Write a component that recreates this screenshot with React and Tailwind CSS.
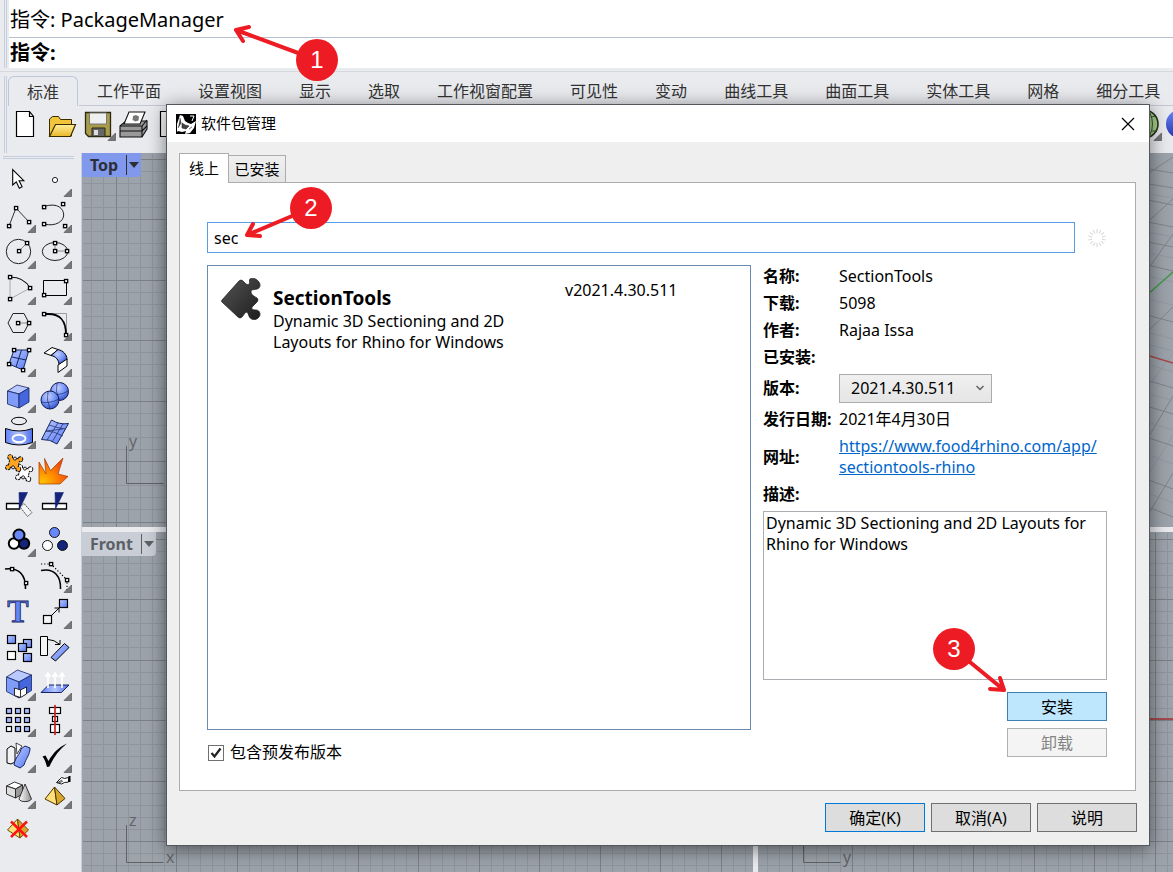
import React, { useState } from 'react';

const BLUE = '#7f9cf8';
const NAVY = '#13247a';

const menuTabs = ['标准', '工作平面', '设置视图', '显示', '选取', '工作视窗配置', '可见性', '变动', '曲线工具', '曲面工具', '实体工具', '网格', '细分工具'];

// Small square control point used by most of the drawing tools
const Knob = ({ x, y }) => (
  <rect x={x - 1.5} y={y - 1.5} width="3.2" height="3.2" fill="#fff" stroke="#000" strokeWidth="1.3" />
);

const Box = ({ x, y, w = 8, h = w, fill = 'url(#blueFade)' }) => (
  <rect x={x} y={y} width={w} height={h} fill={fill} stroke="#000" strokeWidth="1.2" />
);

const Jigsaw = ({ x, y, fill }) => {
  const shape = (
    <>
      <rect x="-4.5" y="-4.5" width="9" height="9" />
      <circle cx="-5" cy="-5" r="2" />
      <circle cx="5.500" cy="-5" r="2" />
      <circle cx="-5" cy="5.500" r="2" />
      <circle cx="5.500" cy="5" r="2" />
    </>
  );
  return (
    <g transform={`translate(${x} ${y}) rotate(12)`}>
      <g fill="none" stroke="#000" strokeWidth="1.800" strokeDasharray="2.500 .6">{shape}</g>
      <g fill={fill}>{shape}</g>
      <circle cx="0" cy="-4.500" r="1.500" fill="#eaebef" stroke="#000" strokeWidth=".8" />
      <circle cx="0" cy="4.500" r="1.500" fill="#eaebef" stroke="#000" strokeWidth=".8" />
    </g>
  );
};

const Gradients = () => (
  <svg className="absolute h-0 w-0" aria-hidden="true">
    <defs>
      <linearGradient id="blueFade" x1="0" y1="0" x2="1" y2="1">
        <stop offset="0" stopColor="#bccbff" />
        <stop offset="1" stopColor="#5478f5" />
      </linearGradient>
      <linearGradient id="blueSide" x1="0" y1="0" x2="1" y2="0">
        <stop offset="0" stopColor="#5f80f8" />
        <stop offset="0.5" stopColor="#b7c6ff" />
        <stop offset="1" stopColor="#4a6cec" />
      </linearGradient>
      <radialGradient id="ball" cx="0.4" cy="0.3" r="0.75">
        <stop offset="0" stopColor="#c3d0ff" />
        <stop offset="0.5" stopColor="#7b98fa" />
        <stop offset="1" stopColor="#2c4ac4" />
      </radialGradient>
      <linearGradient id="gold" x1="0" y1="0" x2="0" y2="1">
        <stop offset="0" stopColor="#fff09a" />
        <stop offset="1" stopColor="#e9b62a" />
      </linearGradient>
      <radialGradient id="fire" cx="0.1" cy="0.95" r="0.95">
        <stop offset="0" stopColor="#ffc400" />
        <stop offset="0.5" stopColor="#ff8a00" />
        <stop offset="1" stopColor="#f04a10" />
      </radialGradient>
      <linearGradient id="steel" x1="0" y1="0" x2="1" y2="0">
        <stop offset="0" stopColor="#fff" />
        <stop offset="1" stopColor="#8f8f8f" />
      </linearGradient>
      <linearGradient id="coal" x1="0" y1="0" x2="1" y2="1">
        <stop offset="0" stopColor="#555" />
        <stop offset="1" stopColor="#1d1d1d" />
      </linearGradient>
      <linearGradient id="shade" x1="0" y1="0" x2="0" y2="1">
        <stop offset="0" stopColor="#6a86f8" />
        <stop offset="1" stopColor="#2536b0" />
      </linearGradient>
    </defs>
  </svg>
);

const tools = [
  { label: 'Select', art: <path d="M12.7 7.5v15.5l3.6-3.2 3 6.4 2.8-1.4-3-6.1h4.7z" fill="#fff" stroke="#000" strokeWidth="1.1" /> },
  { label: 'Point', more: true, art: <circle cx="19" cy="18" r="2.6" fill="#fff" stroke="#222" /> },
  {
    label: 'Polyline', more: true, art: (
      <g fill="none" stroke="#333"><path d="M9 28l7-18 13 14" /><Knob x={9} y={28} /><Knob x={16} y={10} /><Knob x={29} y={24} /></g>
    ),
  },
  {
    label: 'Curve', more: true, art: (
      <g fill="none" stroke="#222"><path d="M8 8.5C22 4 27.700 11 27.700 17S20 29 8 26" /><Knob x={8} y={9} /><Knob x={27} y={6} /><Knob x={29} y={28} /><Knob x={8} y={26} /></g>
    ),
  },
  {
    label: 'Circle', more: true, art: (
      <g fill="none" stroke="#222"><circle cx="18.500" cy="17.500" r="12.200" /><path d="M19 17l8-8" stroke="#888" /><Knob x={19} y={17} /><Knob x={27} y={9} /></g>
    ),
  },
  {
    label: 'Ellipse', more: true, art: (
      <g fill="none" stroke="#222"><ellipse cx="19" cy="17.500" rx="12.700" ry="9" /><path d="M19 9v8h12" stroke="#888" /><Knob x={19} y={9} /><Knob x={19} y={17} /><Knob x={31} y={17} /></g>
    ),
  },
  {
    label: 'Arc', more: true, art: (
      <g fill="none" stroke="#aaa"><path d="M10 7v22l20-11" /><path d="M10 7q14 0 20 11" stroke="#111" strokeWidth="1.2" /><Knob x={10} y={7} /><Knob x={30} y={18} /><Knob x={10} y={29} /></g>
    ),
  },
  {
    label: 'Rectangle', more: true, art: (
      <g fill="none" stroke="#000"><path d="M7.500 10.500h23v15h-23z" /><Knob x={30} y={11} /><Knob x={8} y={25} /></g>
    ),
  },
  {
    label: 'Polygon', more: true, art: (
      <g fill="none" stroke="#222"><path d="M8 17l5-9.500h11L29 17l-5 9.500H13z" /><path d="M18 17h11" stroke="#888" /><Knob x={18} y={17} /><Knob x={29} y={17} /></g>
    ),
  },
  {
    label: 'Fillet', more: true, art: (
      <g fill="none" stroke="#999"><path d="M8 7.500h22.500V29" /><path d="M8 8h4c13 0 18 7 18 21" stroke="#000" strokeWidth="1.800" /><Knob x={8} y={8} /><Knob x={30} y={29} /></g>
    ),
  },
  {
    label: 'Surface', more: true, art: (
      <g stroke="#15245e"><path d="M14 8h15l-6 20-14-6z" fill="url(#blueFade)" /><path d="M12 15l14 3M21.500 8L16 25" fill="none" /><Knob x={14} y={8} /><Knob x={29} y={8} /><Knob x={23} y={28} /><Knob x={9} y={22} /></g>
    ),
  },
  {
    label: 'Blend surface', more: true, art: (
      <g stroke="#000"><path d="M8 11l8-5.500 6 2-7 6z" fill="#fff" /><path d="M15 13.500l7-6c5 1 9 5 9 10l-8 5.500c0-5-3-8.500-8-9.500z" fill="url(#ball)" /><path d="M22 23l9-6v7l-9 6.500z" fill="#fff" /></g>
    ),
  },
  {
    label: 'Box', more: true, art: (
      <g stroke="#15245e" strokeWidth=".8"><path d="M7.500 13l9.500-6 12 3-10 6z" fill="#b9c8ff" /><path d="M7.500 13L19 16v14L7.500 26z" fill={BLUE} /><path d="M19 16l10-6v14l-10 6z" fill="#4666e0" /></g>
    ),
  },
  {
    label: 'Spheres', more: true, art: (
      <g stroke="#0f1c50"><circle cx="23.500" cy="13.500" r="9" fill="url(#ball)" /><path d="M15 16q9 2 17-3M21 5q-2 8 2 17" fill="none" strokeWidth=".6" /><circle cx="14" cy="22" r="9" fill="url(#ball)" /><path d="M5 24q9 2 18-3M12 13q-2 9 2 18" fill="none" strokeWidth=".6" /></g>
    ),
  },
  {
    label: 'Project', more: true, art: (
      <g stroke="#000"><ellipse cx="19" cy="7" rx="7.500" ry="3.700" fill="none" /><path d="M5.500 14.500q13.500 5 27 0v14q-13.500 5-27 0z" fill="url(#blueSide)" /><ellipse cx="19" cy="24.500" rx="6.500" ry="3.700" fill={BLUE} stroke="#fff" strokeWidth="1.800" /></g>
    ),
  },
  {
    label: 'Patch', more: true, art: (
      <g stroke="#15245e"><path d="M5.500 25.500L15.500 6q8 5 17 3.500L21 30q-7-5-15.500-4.500z" fill="url(#blueFade)" /><path d="M10 17q8 0 17 5M13 11q8 3 17 4M11 26L22 9M16 28L27 10M10 17l17-2" fill="none" strokeWidth=".7" /></g>
    ),
  },
  { label: 'Puzzle', art: <g><Jigsaw x={24} y={23} fill="#fff" /><Jigsaw x={14} y={13} fill="#ffa51f" /></g> },
  { label: 'Explode', art: <path d="M3 12l7 12L8.500 8.500l6 12L27 8l-5 16 10 2.500-8 7.500H3z" fill="url(#fire)" stroke="#a53b00" strokeWidth=".7" /> },
  {
    label: 'Trim', art: (
      <g stroke="#000"><path d="M6.500 17.500h13v5.500h-13z" fill="#fff" strokeWidth="1.300" /><path d="M20 21l4-3.500 8 9-4.500 4z" fill="#f4f4f4" stroke="#444" strokeDasharray="2 .7" strokeWidth=".9" /><path d="M19 6.500h8.500L19.500 23z" fill={NAVY} stroke={NAVY} strokeWidth=".6" /></g>
    ),
  },
  {
    label: 'Split', art: (
      <g stroke="#000"><path d="M6.500 17.500h24v5.500h-24z" fill="#fff" strokeWidth="1.300" /><path d="M19 6.500h8.500L19.500 23z" fill={NAVY} stroke={NAVY} strokeWidth=".6" /></g>
    ),
  },
  {
    label: 'Boolean', more: true, art: (
      <g stroke="#000" strokeWidth="2"><circle cx="24" cy="21.500" r="5.200" fill={NAVY} /><circle cx="14" cy="21.500" r="5.200" fill="#fff" /><circle cx="19" cy="13" r="5.500" fill="#6787fa" /></g>
    ),
  },
  {
    label: 'Separate', art: (
      <g stroke="#111"><circle cx="18.500" cy="10.500" r="5" fill="#6787fa" /><circle cx="11.500" cy="23.500" r="5" fill="#fff" /><circle cx="26.500" cy="23.500" r="5" fill={NAVY} /></g>
    ),
  },
  {
    label: 'Edit curve', art: (
      <g><path d="M5 11c14-2 21 6 20.500 20" fill="none" stroke="#000" strokeWidth="1.600" /><Knob x={12} y={11} /><Knob x={26} y={25} /></g>
    ),
  },
  {
    label: 'Control points', more: true, art: (
      <g><path d="M5 6h10l16 16v10" fill="none" stroke="#000" strokeWidth="1.200" strokeDasharray="1.200 2" /><path d="M5 12.500c14-3 20 7 19.500 18.500" fill="none" stroke="#000" strokeWidth="1.600" /><Knob x={15} y={6} /><Knob x={31} y={22} /></g>
    ),
  },
  {
    label: 'Text', art: (
      <text x="18" y="28" textAnchor="middle" className="font-['Liberation_Serif',serif] text-[32px] font-bold" fill="#6483f5" stroke="#15245e" strokeWidth=".8">T</text>
    ),
  },
  {
    label: 'Scale', more: true, art: (
      <g><Box x={7.5} y={21.5} fill="#f6f6f6" /><Box x={23.5} y={5.5} /><path d="M16 21l7-7M18.500 14H23v4.500" fill="none" stroke="#000" /></g>
    ),
  },
  {
    label: 'Copy', art: (
      <g><Box x={7.5} y={5.5} /><Box x={23.5} y={9.5} /><Box x={18.5} y={13.5} /><Box x={7.5} y={21.5} fill="#fff" /><Box x={23.5} y={23.5} /></g>
    ),
  },
  {
    label: 'Rotate', art: (
      <g stroke="#000"><path d="M4.500 6.500h7v19h-7z" fill="#f4f4f4" /><path d="M12 9.500q6 0 12 5M24 10v4.500h-5" fill="none" /><path d="M15 27.500L28.500 13.500l4.500 4-13.500 13.500z" fill="url(#blueFade)" /></g>
    ),
  },
  {
    label: 'Solid tools', more: true, art: (
      <g stroke="#15245e" strokeWidth=".8"><path d="M6.500 11l11-7 14 5-12.500 7z" fill="#b9c8ff" /><path d="M6.500 11L19 16v16L6.500 25.500z" fill={BLUE} /><path d="M19 16l12.500-7v15.500L19 32z" fill="#4666e0" /><path d="M14.500 22l6 2 6-3v7l-6 3.500-6-2z" fill="#fff" stroke="#000" /><path d="M20.500 24v7" stroke="#000" /></g>
    ),
  },
  {
    label: 'Extrude', more: true, art: (
      <g><path d="M5 26.500L12.500 19H33l-7.500 7.500z" fill="url(#blueSide)" stroke="#15245e" /><path d="M12 22V7M19 22V7M26 22V7M9.500 11L12 7l2.500 4M16.500 11L19 7l2.500 4M23.500 11L26 7l2.500 4" fill="none" stroke="#fff" strokeWidth="1.600" /></g>
    ),
  },
  {
    label: 'Array', more: true, art: (
      <g>
        {[6.5, 15.5, 24.5].map((y) => [6.5, 15.5, 24.5].map((x) => (
          <Box key={`${x}-${y}`} x={x} y={y} w={5} fill={x < 7 && y > 24 ? '#fff' : '#a3b8ff'} />
        )))}
      </g>
    ),
  },
  {
    label: 'Align', more: true, art: (
      <g><Box x={13.5} y={5.5} w={11} h={6} fill="#fff" /><Box x={16.5} y={14.5} w={5} fill="#fff" /><Box x={14.5} y={22.5} w={9} h={8} fill="#fff" /><path d="M19 3v30" stroke="#d21f1f" strokeWidth="1.700" /></g>
    ),
  },
  {
    label: 'Flow', more: true, art: (
      <g stroke="#000"><path d="M7 11l4-3 4 2v14l-4 2-4-1z" fill="#f2f2f2" /><path d="M16 5l6 3-5 8z" fill="#fff" strokeWidth=".7" /><path d="M21 11l4-3 5 2c0 7-4 10-6 17l-4 3-6-3c1-8 6-10 7-16z" fill="url(#blueFade)" stroke="#15245e" /></g>
    ),
  },
  { label: 'Check', more: true, art: <path d="M6.500 18.500l3-1 3 5.500C17 15 23 9 31 5.500 23 12 17 20 13.500 28.500l-2.500.5c-1-4-2.500-8-4.500-10.500z" fill="#000" /> },
  {
    label: 'Primitives', more: true, art: (
      <g stroke="#222" strokeWidth=".9"><path d="M6.500 12l8-4 8 3-7 4z" fill="#fff" /><path d="M6.500 12l9 3v9l-9-4z" fill="#ddd" /><path d="M15.500 15l7-4v9l-7 4z" fill="#9a9a9a" /><path d="M25 10l6.500 15c-2 3.500-11 3.500-12.500 0z" fill="url(#steel)" /></g>
    ),
  },
  {
    label: 'Render', more: true, art: (
      <g stroke="#4a3500"><path d="M9 25l9.500-12L21 31z" fill="#ffe07a" /><path d="M18.500 13L29 24.500 21 31z" fill="#d9a62c" /><path d="M20.500 8.500l5-5 3 1 4-1v4.500l-4 .5-3 1.500z" fill="#fff" stroke="#000" strokeWidth=".9" /><path d="M21 9l5-3M23 9l4-2" stroke="#000" strokeWidth=".7" /><path d="M33.500 2v6" stroke="#000" strokeWidth="2" /></g>
    ),
  },
  {
    label: 'Delete', art: (
      <g stroke="#6b4b00"><path d="M7.500 20l10-11L20 28z" fill="#ffe07a" /><path d="M17.500 9l11 11-8.500 8z" fill="#d9a62c" /><path d="M11 11.500l16 15.500M27 11.500L11 27" stroke="#f11" strokeWidth="2.500" /></g>
    ),
  },
];

const sheet = <path d="M8.500 5.500h13l4 5v20h-17zM21.500 6v4.500h4" fill="#fff" stroke="#000" strokeWidth="1.200" />;

const fileTools = [
  { label: 'New', art: sheet },
  {
    label: 'Open', art: (
      <g stroke="#3a2c00"><path d="M5.500 30V13l3-2.500h6l2 3h11V30z" fill="#f0c53c" /><path d="M5.500 30.500l6-12h20l-5 12z" fill="url(#gold)" strokeWidth="1.200" /></g>
    ),
  },
  {
    label: 'Save', more: true, art: (
      <g stroke="#2a2810"><path d="M5.500 6.500h25v24h-22l-3-3z" fill="#a89c4a" strokeWidth="1.300" /><path d="M9.500 7h17v11h-17z" fill="#eef0f0" stroke="#777" /><path d="M12 22h13v8.500H12z" fill="#666" /><path d="M14 24h4v5h-4z" fill="#ddd" stroke="none" /></g>
    ),
  },
  {
    label: 'Print', art: (
      <g stroke="#111" strokeWidth="1.100"><path d="M4 20l6-5h21v8l-5 8H4z" fill="#999" /><path d="M4 20h22l5-6M4 25h22l5-5M26 20v11" fill="none" /><path d="M13 6h16l-5 12H8z" fill="#fff" /><path d="M17 10l3-1 3 1.500-.5 4-3 1-3-1.500z" fill="#777" stroke="none" /></g>
    ),
  },
  { label: 'Properties', art: sheet },
];

const ToolButton = ({ label, more, art }) => (
  <button type="button" aria-label={label} className="h-9 w-9 shrink-0">
    <svg viewBox="0 0 36 36" className="h-9 w-9">
      {art}
      {more && <path d="M35.500 27v7.500H28z" fill="#777" stroke="#555" strokeWidth=".7" />}
    </svg>
  </button>
);

// Construction plane grid: every fifth line is darker
const Grid = ({ x0, y0, children }) => {
  const lines = Array.from({ length: 100 }, (_, i) => i);
  const draw = (bold) =>
    lines
      .filter((i) => (i % 5 === 0) === bold)
      .map((i) => `M${Math.round(x0 + i * 12.1)} 0v2000M0 ${Math.round(y0 + i * 12.1)}h3000`)
      .join('');
  return (
    <svg className="absolute inset-0 h-full w-full" shapeRendering="crispEdges" aria-hidden="true">
      <path d={draw(false)} transform="translate(.5 .5)" stroke="#8e959e" />
      <path d={draw(true)} transform="translate(.5 .5)" stroke="#7b8188" />
      {children}
    </svg>
  );
};

const Axes = ({ up, right, className }) => (
  <svg viewBox="0 -12 56 64" className={`absolute h-16 w-14 text-[#5f6368] ${className}`}>
    <path d="M.500 10v37.500h37" fill="none" stroke="currentColor" />
    <g fill="currentColor" className="font-['Open_Sans',sans-serif] text-[16px]">
      {up && <text x="3" y="11">{up}</text>}
      {right && <text x="40" y="48">{right}</text>}
    </g>
  </svg>
);

const ViewTitle = ({ children, className }) => (
  <button type="button" className={`absolute left-0 top-0 flex h-6 items-center rounded-br text-base font-bold ${className}`}>
    <span className="px-2">{children}</span>
    <span className="flex h-5 items-center border-l border-current px-[2px]">
      <svg viewBox="0 0 10 10" className="h-[10px] w-[10px]"><path d="M0 2h10L5 8z" fill="currentColor" /></svg>
    </span>
  </button>
);

// Numbered red marker with an arrow to the thing it explains
const Marker = ({ n, cx, cy, arrow, className }) => (
  <svg viewBox="0 0 112 72" className={`pointer-events-none absolute h-[72px] w-[112px] ${className}`}>
    <path d={arrow} fill="none" stroke="#ed1c24" strokeWidth="4" strokeLinecap="round" strokeLinejoin="round" />
    <circle cx={cx} cy={cy} r="21" fill="#ed1c24" />
    <text x={cx} y={cy + 8} textAnchor="middle" fill="#fff" className="font-['Liberation_Sans',sans-serif] text-[24px]">{n}</text>
  </svg>
);

const PuzzlePiece = () => (
  <svg viewBox="0 0 40 42" className="mt-3 h-[42px] w-10 shrink-0">
    <path d="M1 22L18 3q2-2 4 0l3 3c3 2 4-1 3.500-3C28 0 32-1 36 2s4 8 0 9c-3 1-6 0-6 3s3 4 6 6q2 2 0 4l-4 4c-3 3 0 4 3 4 4 0 5 5 3 7-3 4-9 3-10-1-1-3-2-5-4-3l-3 4q-2 2-4 0L1 24q-1-1 0-2z" fill="url(#coal)" stroke="#222" strokeWidth=".8" />
  </svg>
);

const Spinner = () => (
  <svg viewBox="0 0 20 20" className="h-5 w-5 shrink-0" aria-label="loading">
    {Array.from({ length: 14 }, (_, i) => (
      <path key={i} d="M10 1v4" stroke="#dcdcdc" strokeWidth="1.200" transform={`rotate(${i * 25.714} 10 10)`} />
    ))}
  </svg>
);

const dialogButton = 'h-[29px] w-[100px] border text-base leading-5';

const PackageDialog = () => {
  const [query, setQuery] = useState('sec');
  const [prerelease, setPrerelease] = useState(true);

  return (
    <section role="dialog" aria-label="软件包管理" className="absolute left-[166px] right-[23px] top-[104px] border border-[#54585c] bg-[#efefef] text-base leading-[21px] text-black shadow-[0_3px_18px_rgba(0,0,0,0.5)]">
      <header className="flex h-[37px] items-center bg-white pl-[9px] pr-[14px]">
        <svg viewBox="0 0 20 20" className="h-5 w-5" aria-hidden="true">
          <path d="M0 0h20v20H0z" />
          <path d="M1 10l3-9 3 1 2 5 3 2 3 1 5-3-2 7-4 5-5 1 1-3-4 1-4-1-1 1z" fill="#fff" />
          <path d="M6 9l3 2 4 1-3 3-4-1zM13 15l3-2M4 4l1 5-3 5" fill="#444" stroke="#222" strokeWidth=".6" />
          <path d="M14 2h4l-2 5" fill="none" stroke="#fff" />
        </svg>
        <h1 className="ml-[5px] text-[15px]">软件包管理</h1>
        <button type="button" aria-label="Close" className="ml-auto">
          <svg viewBox="0 0 14 14" className="h-[14px] w-[14px]"><path d="M1 1l12 12M13 1L1 13" stroke="#000" strokeWidth="1.200" /></svg>
        </button>
      </header>

      <div className="pb-[13px] pl-3 pr-[13px] pt-[11px]">
        <div role="tablist" className="flex items-end text-[15px]">
          <button type="button" role="tab" aria-selected="true" className="relative -mb-px h-[30px] w-[50px] border border-b-0 border-[#acacac] bg-white">线上</button>
          <button type="button" role="tab" aria-selected="false" className="h-[27px] w-[57px] border border-b-0 border-l-0 border-[#acacac] bg-linear-to-b from-[#f0f0f0] to-[#e4e4e4]">已安装</button>
        </div>

        <div className="border border-[#acacac] bg-white pb-[33px] pl-[27px] pr-7 pt-[39px]">
          <div className="flex items-center gap-3">
            <input
              type="text"
              aria-label="Search packages"
              value={query}
              onChange={(e) => setQuery(e.target.value)}
              className="h-[31px] min-w-0 flex-1 border border-[#569de5] px-[6px] outline-none"
            />
            <Spinner />
          </div>

          <div className="mt-3 flex gap-3">
            <div className="-mb-[6px] flex min-w-0 flex-1 flex-col">
              <ul className="flex-1 border border-[#6a8bb0]">
                <li className="flex pl-[13px] pr-3">
                  <PuzzlePiece />
                  <div className="ml-3 mt-[19px] w-[280px]">
                    <h2 className="text-[19px] font-bold leading-[26px]">SectionTools</h2>
                    <p>Dynamic 3D Sectioning and 2D Layouts for Rhino for Windows</p>
                  </div>
                  <span className="ml-3 mt-[14px]">v2021.4.30.511</span>
                </li>
              </ul>
              <label className="mt-3 flex items-center gap-[6px]">
                <span className="relative ml-px h-4 w-4">
                  <input
                    type="checkbox"
                    checked={prerelease}
                    onChange={(e) => setPrerelease(e.target.checked)}
                    className="block h-4 w-4 appearance-none border border-[#707070] bg-white"
                  />
                  {prerelease && (
                    <svg viewBox="0 0 16 16" className="pointer-events-none absolute inset-0 h-4 w-4"><path d="M3.500 8l3 3.500 6-8" fill="none" stroke="#212121" strokeWidth="2.200" /></svg>
                  )}
                </span>
                包含预发布版本
              </label>
            </div>

            <div className="w-[344px] shrink-0 pt-px">
              <dl className="grid grid-cols-[76px_1fr] items-center gap-y-[6px] [&>dt]:whitespace-nowrap [&>dt]:font-bold">
                <dt>名称:</dt>
                <dd>SectionTools</dd>
                <dt>下载:</dt>
                <dd>5098</dd>
                <dt>作者:</dt>
                <dd>Rajaa Issa</dd>
                <dt>已安装:</dt>
                <dd />
                <dt><label htmlFor="version">版本:</label></dt>
                <dd className="relative w-[153px]">
                  <select id="version" className="block h-[29px] w-full appearance-none border border-[#acacac] bg-linear-to-b from-[#f0f0f0] to-[#e5e5e5] pl-[11px]">
                    <option>2021.4.30.511</option>
                  </select>
                  <svg viewBox="0 0 8 8" className="pointer-events-none absolute right-2 top-[10px] h-2 w-2"><path d="M.500 2L4 5.500 7.500 2" fill="none" stroke="#606060" strokeWidth="1.500" /></svg>
                </dd>
                <dt>发行日期:</dt>
                <dd>2021年4月30日</dd>
                <dt>网址:</dt>
                <dd>
                  <a href="https://www.food4rhino.com/app/sectiontools-rhino" className="text-[#0066cc] underline">https://www.food4rhino.com/app/<wbr />sectiontools-rhino</a>
                </dd>
                <dt><label htmlFor="description">描述:</label></dt>
                <dd />
              </dl>
              <textarea
                id="description"
                readOnly
                defaultValue="Dynamic 3D Sectioning and 2D Layouts for Rhino for Windows"
                className="mt-[6px] block h-[169px] w-full resize-none border border-[#abadb3] px-[2px] pt-px outline-none"
              />
              <div className="mt-3 flex flex-col items-end gap-[7px]">
                <button type="button" className={`${dialogButton} border-[#3c7fb1] bg-[#bee6fd]`}>安装</button>
                <button type="button" disabled className={`${dialogButton} border-[#adb2b5] bg-[#f4f4f4] text-[#838383]`}>卸载</button>
              </div>
            </div>
          </div>
        </div>

        <footer className="-mr-px mt-3 flex justify-end gap-[6px]">
          <button type="button" className={`${dialogButton} border-[#0078d7] bg-[#dddddd]`}>确定(K)</button>
          <button type="button" className={`${dialogButton} border-[#707070] bg-[#dddddd]`}>取消(A)</button>
          <button type="button" className={`${dialogButton} border-[#707070] bg-[#dddddd]`}>说明</button>
        </footer>
      </div>
    </section>
  );
};

const App = () => {
  return (
    <main className="relative flex min-h-screen flex-col overflow-hidden bg-[#eaebef] font-['Noto_Sans','Noto_Sans_CJK_SC',sans-serif] text-[#333]">
      <Gradients />

      <section className="flex border-b border-[#d5d8de] pb-[3px] pl-1 text-xl text-black">
        <div className="mr-[2px] w-[3px] border-x border-[#c5cedf]" />
        <div className="flex-1 bg-white">
          <p className="h-[38px] border-b border-[#b9c0d0] pl-px leading-[39px]">指令: PackageManager</p>
          <label className="flex h-[30px] items-center pl-px font-bold">
            指令:
            <input type="text" className="ml-2 min-w-0 flex-1 outline-none" />
          </label>
        </div>
      </section>

      <section className="flex pl-1 pt-1">
        <div className="mr-px w-[3px] border-x border-[#c5cedf]" />
        <div className="min-w-0 flex-1">
          <nav className="flex h-[30px] gap-px text-base">
            {menuTabs.map((name, i) => (
              <button
                key={name}
                type="button"
                className={`shrink-0 whitespace-nowrap px-[18px] ${i === 0 ? 'rounded-t-md border border-b-0 border-[#bcc7de]' : 'border-b border-[#c4c8d6]'}`}
              >
                {name}
              </button>
            ))}
          </nav>
          <div className="flex h-[47px] overflow-hidden">
            {fileTools.map((tool) => <ToolButton key={tool.label} {...tool} />)}
            <div className="-mr-[25px] ml-auto flex">
              <ToolButton label="Globe" more art={<g stroke="#26331d"><circle cx="18" cy="18" r="14" fill="#a5d088" strokeWidth="1.600" /><path d="M24 7q5 11 0 22M25 11l5-1M26 25l5 0" fill="none" strokeWidth=".8" /></g>} />
              <ToolButton label="Shade" art={<circle cx="18" cy="18" r="14" fill="url(#shade)" />} />
            </div>
          </div>
        </div>
      </section>

      <div className="flex flex-1">
        <aside className="w-[82px] shrink-0 border-r border-[#c9cedb]">
          <div className="mb-[3px] ml-[3px] mt-[3px] h-[3px] w-[71px] border-y border-[#c5cedf]" />
          <div className="grid w-[72px] grid-cols-2">
            {tools.map((tool) => <ToolButton key={tool.label} {...tool} />)}
          </div>
        </aside>

        <div className="grid flex-1 grid-cols-[21fr_13fr] grid-rows-[11fr_10fr] gap-[5px]">
          <section className="relative overflow-hidden bg-[#9ca3ab]">
            <Grid x0={-27} y0={-55} />
            <Axes up="y" className="bottom-[39px] left-11" />
            <ViewTitle className="bg-[#8199ec] text-[#2c2f36]">Top</ViewTitle>
          </section>

          <section className="relative flex justify-end overflow-hidden bg-[#9ca3ab]">
            <svg viewBox="0 0 30 374" className="h-[374px] w-[30px]" fill="none" aria-hidden="true">
              <path d="M0 24L30 4M0 73l30-27M0 123l30-42M0 183l30-29M0 293l30-50M0 370l30-50M0 15l30 5M0 30l30 5M0 46l30 6M0 68l30 6M0 88l30 6M0 111l30 7M0 161l30 8M0 226l30 9M0 252l30 9M0 283l30 10M0 325l30 11M0 352l30 12" stroke="#7f858c" />
              <path d="M0 40l30 5M0 78l30 6M0 99l30 6M0 122l30 7M0 145l30 7M0 178l30 8M0 190l30 8M0 210l30 9M0 239l30 9M0 268l30 9M0 300l30 11M0 338l30 12M0 240l30-40M0 330l30-48" stroke="#8e959e" strokeWidth=".7" />
              <path d="M4 142l26-23" stroke="#3f9a45" strokeWidth="1.500" />
              <path d="M0 201l30 9" stroke="#a84848" strokeWidth="1.500" />
            </svg>
          </section>

          <section className="relative overflow-hidden bg-[#9ca3ab]">
            <Grid x0={-27} y0={-54} />
            <Axes up="z" right="x" className="bottom-[5px] left-11" />
            <ViewTitle className="bg-[#c9cdd5] text-[#5c6066]">Front</ViewTitle>
          </section>

          <section className="relative overflow-hidden bg-[#9ca3ab]">
            <Grid x0={-27} y0={-54}>
              <path d="M0 187h3000" stroke="#a24a4f" strokeWidth="2" />
            </Grid>
            <Axes right="y" className="bottom-[5px] left-[45px]" />
          </section>
        </div>
      </div>

      <PackageDialog />

      <Marker n="1" cx={88} cy={43} arrow="M88 43L7 13M20 10L7 13l7 11" className="left-[229px] top-[17px]" />
      <Marker n="2" cx={72} cy={24} arrow="M72 24L8 51M14 40L8 51l13 1" className="left-[239px] top-[184px]" />
      <Marker n="3" cx={24} cy={24} arrow="M24 24l50 41M60 64l14 1-4-12" className="right-[131px] top-[625px]" />
    </main>
  );
};

export default App;
